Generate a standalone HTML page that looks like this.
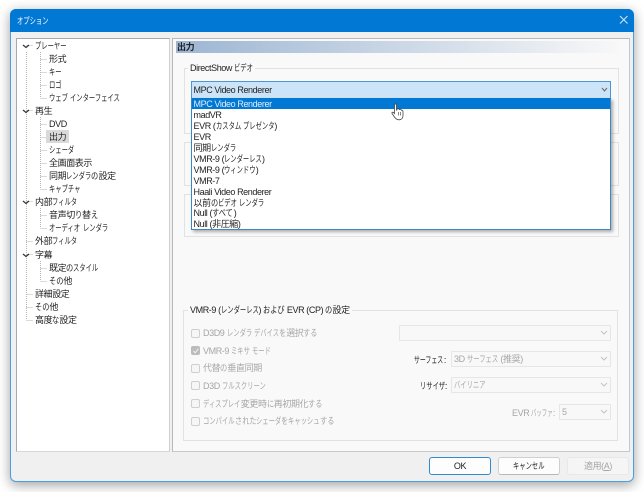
<!DOCTYPE html>
<html lang="ja"><head><meta charset="utf-8"><style>
html,body{margin:0;padding:0;background:#fff;width:644px;height:492px;overflow:hidden}
*{box-sizing:border-box}
#root{position:absolute;left:0;top:0;width:644px;height:492px;overflow:hidden;filter:blur(.3px);font:9px/11px "Liberation Sans","Noto Sans CJK JP",sans-serif;color:#222;letter-spacing:-.4px}
i,b{font-style:normal;font-weight:inherit;display:inline-block;white-space:nowrap;letter-spacing:0;transform-origin:0 50%}
i{transform:scaleX(.7);width:calc(var(--n)*6.3px)}
b{transform:scaleX(.8);width:calc(var(--n)*7.2px)}
.a{position:absolute}
.t{position:absolute;white-space:nowrap;line-height:12px}
#win{left:10px;top:9px;width:624px;height:473px;background:#f0f0f0;border:1px solid #4a9fe0;border-radius:6px;box-shadow:0 3px 12px rgba(0,0,0,.38)}
#title{left:10px;top:9px;width:624px;height:23px;background:#0078d4;border-radius:6px 6px 0 0}
#tree{left:16px;top:38px;width:154px;height:414px;background:#fff;border:1px solid #a8a8b0;border-right-color:#d0d0d0;border-bottom-color:#d8d8d8}
#panel{left:172px;top:38px;width:458px;height:414px;background:#f9f9f9;border:1px solid #c8c8c8;border-left-color:#b8b8b8;border-top-color:#b8b8b8}
#hd{left:176px;top:41px;width:444px;height:12px;background:linear-gradient(90deg,#9db6d3,#f8f8f8)}
.g{position:absolute;border:1px solid #e2e2e2}
.leg{position:absolute;background:#f9f9f9;padding:0 2px;white-space:nowrap;line-height:12px}
.dis{color:#a6a6a6}
.cb{position:absolute;left:191px;width:9px;height:9px;border:1px solid #cfcfcf;border-radius:2px;background:#f6f6f6}
.sel{position:absolute;background:#f8f8f8;border:1px solid #e6e6e6;height:16px;border-radius:1px}
.btn{position:absolute;top:457px;height:18px;text-align:center;line-height:16px;border-radius:3px;background:#fdfdfd;border:1px solid #d0d0d0;border-bottom-color:#b8b8b8}
#dd{left:191px;top:98px;width:420px;height:132px;background:#fff;border:1px solid #3f86c2;border-top:0;box-shadow:2px 2px 3px rgba(0,0,0,.3)}
.r{position:absolute;left:193.500px;white-space:nowrap;line-height:11px;color:#222}
svg{position:absolute;overflow:visible}
</style></head><body><div id="root">
<div class="a" id="win"></div>
<div class="a" id="title"></div>
<div class="t" style="left:17px;top:15px;color:#fff"><i style="--n:5">オプション</i></div>
<svg style="left:619px;top:15px" width="10" height="10"><path d="M1 1L8.500 8.500M8.500 1L1 8.500" stroke="#d8e8f6" stroke-width="1" fill="none"/></svg>

<div class="a" id="tree"></div>
<svg style="left:0;top:0" width="170" height="340">
<g stroke="#b4b4b4" stroke-width="1" stroke-dasharray="1 1" fill="none">
<path d="M26.500 52V320M26.500 45.500H33M26.500 110.500H33M26.500 201.500H33M26.500 241.500H33M26.500 254.500H33M26.500 294.500H33M26.500 307.500H33M26.500 320.500H33"/>
<path d="M40.500 52V98M40.500 59.500H47M40.500 72.500H47M40.500 85.500H47M40.500 98.500H47"/>
<path d="M40.500 117V189M40.500 124.500H47M40.500 137.500H47M40.500 150.500H47M40.500 163.500H47M40.500 176.500H47M40.500 189.500H47"/>
<path d="M40.500 208V228M40.500 215.500H47M40.500 228.500H47"/>
<path d="M40.500 261V281M40.500 268.500H47M40.500 281.500H47"/>
</g>
<g stroke="#333" stroke-width="1.200" fill="none">
<path d="M23 45L26 47.500L29 45M23 110L26 112.500L29 110M23 201L26 203.500L29 201M23 254L26 256.500L29 254"/>
</g>
</svg>
<div class="a" style="left:46px;top:130px;width:23px;height:13px;background:#d9d9d9"></div>
<div class="t" style="left:35px;top:39.500px"><i style="--n:5">プレーヤー</i></div>
<div class="t" style="left:49px;top:53px">形式</div>
<div class="t" style="left:49px;top:66px"><i style="--n:2">キー</i></div>
<div class="t" style="left:49px;top:79px"><i style="--n:2">ロゴ</i></div>
<div class="t" style="left:49px;top:92px"><i style="--n:3">ウェブ</i> <i style="--n:8">インターフェイス</i></div>
<div class="t" style="left:35px;top:105px">再生</div>
<div class="t" style="left:49px;top:118px">DVD</div>
<div class="t" style="left:49px;top:131px">出力</div>
<div class="t" style="left:49px;top:144px"><i style="--n:4">シェーダ</i></div>
<div class="t" style="left:49px;top:157px">全画面表示</div>
<div class="t" style="left:49px;top:170px">同期<i style="--n:4">レンダラ</i><b style="--n:1">の</b>設定</div>
<div class="t" style="left:49px;top:183px"><i style="--n:5">キャプチャ</i></div>
<div class="t" style="left:35px;top:196px">内部<i style="--n:4">フィルタ</i></div>
<div class="t" style="left:49px;top:209px">音声切<b style="--n:1">り</b>替<b style="--n:1">え</b></div>
<div class="t" style="left:49px;top:222px"><i style="--n:5">オーディオ</i> <i style="--n:4">レンダラ</i></div>
<div class="t" style="left:35px;top:235px">外部<i style="--n:4">フィルタ</i></div>
<div class="t" style="left:35px;top:249px">字幕</div>
<div class="t" style="left:49px;top:262px">既定<b style="--n:1">の</b><i style="--n:4">スタイル</i></div>
<div class="t" style="left:49px;top:275px"><b style="--n:2">その</b>他</div>
<div class="t" style="left:35px;top:288px">詳細設定</div>
<div class="t" style="left:35px;top:301px"><b style="--n:2">その</b>他</div>
<div class="t" style="left:35px;top:314px">高度<b style="--n:1">な</b>設定</div>

<div class="a" id="panel"></div>
<div class="a" id="hd"></div>
<div class="t" style="left:177px;top:41px;font-weight:bold">出力</div>

<div class="g" style="left:184px;top:68px;width:435px;height:66px"></div>
<div class="leg" style="left:188px;top:62px">DirectShow <i style="--n:3">ビデオ</i></div>
<div class="g" style="left:184px;top:142px;width:435px;height:44px"></div>
<div class="g" style="left:184px;top:194px;width:435px;height:43px"></div>

<div class="a" style="left:191px;top:81px;width:420px;height:18px;background:#cce4f7;border:1px solid #4f96d1"></div>
<div class="t" style="left:193.500px;top:84px">MPC Video Renderer</div>
<svg style="left:601px;top:87px" width="8" height="6"><path d="M1 1L3.500 4L6 1" stroke="#666" stroke-width="1" fill="none"/></svg>

<div class="a" id="dd"></div>
<div class="a" style="left:192px;top:98px;width:418px;height:11px;background:#0078d4"></div>
<div class="r" style="top:98.500px;color:#dfeefa">MPC Video Renderer</div>
<div class="r" style="top:110px">madVR</div>
<div class="r" style="top:121px">EVR (<i style="--n:4">カスタム</i> <i style="--n:5">プレゼンタ</i>)</div>
<div class="r" style="top:132px">EVR</div>
<div class="r" style="top:143px">同期<i style="--n:4">レンダラ</i></div>
<div class="r" style="top:154px">VMR-9 (<i style="--n:6">レンダーレス</i>)</div>
<div class="r" style="top:164.800px">VMR-9 (<i style="--n:5">ウィンドウ</i>)</div>
<div class="r" style="top:175.700px">VMR-7</div>
<div class="r" style="top:186.600px">Haali Video Renderer</div>
<div class="r" style="top:197.500px">以前<b style="--n:1">の</b><i style="--n:3">ビデオ</i> <i style="--n:4">レンダラ</i></div>
<div class="r" style="top:208.400px">Null (<b style="--n:3">すべて</b>)</div>
<div class="r" style="top:219.300px">Null (非圧縮)</div>

<svg style="left:391px;top:103px" width="14" height="18"><path d="M3.500 1.500C4 .8 5 .8 5.500 1.500V7.500L6 6C7 5.500 8 5.500 8.300 6.500C9.300 6 10 6.200 10.300 7.200C11.300 7 12 7.500 12 8.500V12.500C12 15 10.500 16.800 8 16.800C5.500 16.800 4.500 15.500 3.500 14L1 10.500C.6 9.500 1.500 8.800 2.500 9.500L3.500 10.500Z" fill="#fff" stroke="#444" stroke-width=".8"/><path d="M7.500 9V12.500M9.500 9V12.500" stroke="#555" stroke-width=".7"/></svg>

<div class="g" style="left:183px;top:310px;width:435px;height:131px"></div>
<div class="leg" style="left:188px;top:304px;color:#222">VMR-9 (<i style="--n:6">レンダーレス</i>) <b style="--n:3">および</b> EVR (CP) <b style="--n:1">の</b>設定</div>

<div class="cb" style="top:329px"></div><div class="t dis" style="left:203px;top:327px">D3D9 <i style="--n:4">レンダラ</i> <i style="--n:4">デバイス</i><b style="--n:1">を</b>選択<b style="--n:2">する</b></div>
<div class="cb" style="top:346px;background:#bcbcbc;border-color:#bcbcbc"></div>
<svg style="left:192px;top:347px" width="8" height="8"><path d="M1.500 4L3.200 5.800L6.300 1.800" stroke="#f2f2f2" stroke-width="1" fill="none"/></svg>
<div class="t dis" style="left:203px;top:345px">VMR-9 <i style="--n:3">ミキサ</i> <i style="--n:3">モード</i></div>
<div class="cb" style="top:364px"></div><div class="t dis" style="left:203px;top:362px">代替<b style="--n:1">の</b>垂直同期</div>
<div class="cb" style="top:381px"></div><div class="t dis" style="left:203px;top:380px">D3D <i style="--n:7">フルスクリーン</i></div>
<div class="cb" style="top:399px"></div><div class="t dis" style="left:203px;top:398px"><i style="--n:6">ディスプレイ</i>変更時<b style="--n:1">に</b>再初期化<b style="--n:2">する</b></div>
<div class="cb" style="top:417px"></div><div class="t dis" style="left:203px;top:415px"><i style="--n:5">コンパイル</i><b style="--n:3">された</b><i style="--n:4">シェーダ</i><b style="--n:1">を</b><i style="--n:5">キャッシュ</i><b style="--n:2">する</b></div>

<div class="sel" style="left:399px;top:325px;width:212px"></div>
<div class="t" style="right:198px;top:354px"><i style="width:29.500px;transform:scaleX(.655)">サーフェス</i>:</div>
<div class="sel" style="left:451px;top:351px;width:160px"></div>
<div class="t dis" style="left:454px;top:353px">3D <i style="--n:5">サーフェス</i> (推奨)</div>
<div class="t" style="right:197px;top:380px"><i style="--n:4">リサイザ</i>:</div>
<div class="sel" style="left:451px;top:377px;width:160px"></div>
<div class="t dis" style="left:454px;top:379px"><i style="--n:5">バイリニア</i></div>
<div class="t dis" style="right:89px;top:407px">EVR <i style="width:21.500px;transform:scaleX(.6)">バッファ</i>:</div>
<div class="sel" style="left:559px;top:404px;width:52px"></div>
<div class="t dis" style="left:562px;top:406px">5</div>
<svg style="left:0;top:0" width="644" height="492"><g stroke="#c4c4c4" stroke-width="1" fill="none">
<path d="M601 331L604 334L607 331M601 357L604 360L607 357M601 383L604 386L607 383M601 410L604 413L607 410"/></g></svg>

<div class="btn" style="left:429px;width:62px;border:1px solid #2f8ad0;background:#fdfdfd">OK</div>
<div class="btn" style="left:498px;width:62px"><i style="--n:5">キャンセル</i></div>
<div class="btn dis" style="left:567px;width:62px;background:#f5f5f5;border-color:#e8e8e8">適用(<u>A</u>)</div>
</div></body></html>
